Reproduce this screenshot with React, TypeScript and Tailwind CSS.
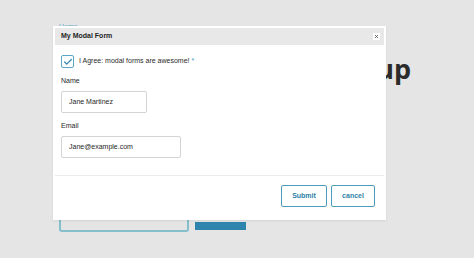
import { Check, X } from "lucide-react"

const font = { fontFamily: '"Liberation Sans", Arial, sans-serif' }

function BackgroundPage() {
  return (
    <div className="flex h-full flex-col pl-[59px] pt-[23px]">
      {/* breadcrumb link, mostly under the modal */}
      <a className="text-[7px] leading-[8px] text-[#5aaac8]">Home</a>
      <div className="mt-[23px] flex justify-end pr-[63px]">
        <h1
          className="text-[27px] font-bold leading-[30px] text-[#2b2b2b]"
          style={{ fontFamily: '"Open Sans", "Liberation Sans", sans-serif' }}
        >
          Modal Popup
        </h1>
      </div>
      <div className="mt-[134px] flex gap-[6px]">
        <div className="h-[14px] w-[130px] rounded-b-[3px] border-2 border-t-0 border-[#84bfcc] bg-[#e4e4e4]" />
        <div className="mt-[4px] h-[8px] w-[51px] bg-[#2f84ae]" />
      </div>
    </div>
  )
}

function Field({ label, value, width }: { label: string; value: string; width: string }) {
  return (
    <div className="flex flex-col">
      <label className="text-[7px] leading-[9px] text-[#1f1f1f]">{label}</label>
      <div
        className={`mt-[6px] flex h-[22px] items-center rounded-[2px] border border-[#d4d4d4] bg-white pl-[7px] text-[7px] text-[#1f1f1f] ${width}`}
      >
        {value}
      </div>
    </div>
  )
}

function ModalForm() {
  return (
    <div className="absolute left-[53px] top-[26px] flex h-[194px] w-[333px] flex-col bg-white p-[2px] shadow-[0_1px_2px_rgba(0,0,0,0.08)]">
      <div className="flex h-[17px] items-center justify-between bg-[#e8e8e8] pl-[6px] pr-[4px]">
        <span className="text-[7px] font-bold text-[#1f1f1f]">My Modal Form</span>
        <span className="flex h-[7px] w-[7px] items-center justify-center bg-white">
          <X className="h-[5px] w-[5px] text-[#555]" strokeWidth={4} />
        </span>
      </div>

      <div className="flex flex-col px-[6px] pt-[10px]">
        <div className="flex items-center gap-[5px]">
          <span className="flex h-[13px] w-[13px] items-center justify-center rounded-[2px] border border-[#5aa6c6] bg-white">
            <Check className="h-[10px] w-[10px] text-[#3487b0]" strokeWidth={3} />
          </span>
          <span className="text-[7px] text-[#2a2a2a]">
            I Agree: modal forms are awesome! <span className="text-[#3b9cc0]">*</span>
          </span>
        </div>

        <div className="mt-[8px] flex flex-col gap-[8px]">
          <Field label="Name" value="Jane Martinez" width="w-[86px]" />
          <Field label="Email" value="Jane@example.com" width="w-[120px]" />
        </div>
      </div>

      <div className="mt-[17px] border-t border-[#ededed]" />

      <div className="flex justify-end gap-[4px] pr-[9px] pt-[9px]">
        <button className="h-[22px] w-[46px] rounded-[2px] border border-[#4f9cbd] bg-white text-[7px] font-bold text-[#2f7fa8]">
          Submit
        </button>
        <button className="h-[22px] w-[44px] rounded-[2px] border border-[#4f9cbd] bg-white text-[7px] font-bold text-[#2f7fa8]">
          cancel
        </button>
      </div>
    </div>
  )
}

export default function App() {
  return (
    <div className="relative h-[258px] w-[474px] overflow-hidden bg-[#e5e5e5]" style={font}>
      <BackgroundPage />
      <ModalForm />
    </div>
  )
}
